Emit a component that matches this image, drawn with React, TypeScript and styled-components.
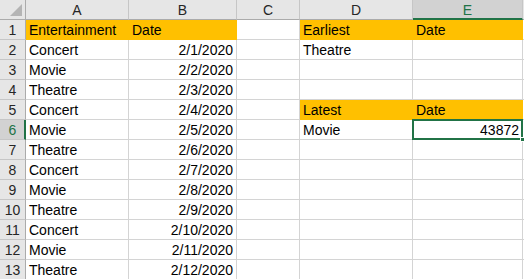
import React from 'react';
import styled, { createGlobalStyle, css } from 'styled-components';

const GlobalStyle = createGlobalStyle`
  html, body {
    margin: 0;
    padding: 0;
    background: #ffffff;
  }
  body {
    font-family: 'Liberation Sans', Arial, sans-serif;
    overflow: hidden;
  }
`;

const GREEN = '#217346';
const FILL = '#ffc000';
const GRID = '#d4d4d4';
const HEAD_LINE = '#ababab';

const COLUMNS = ['A', 'B', 'C', 'D', 'E'];
const SELECTED_COL = 'E';
const SELECTED_ROW = 6;

type CellData = { value?: string; align?: 'left' | 'right'; fill?: boolean };

const entertainment = ['Concert', 'Movie', 'Theatre'];

const buildRows = (): CellData[][] => {
  const rows: CellData[][] = [];
  for (let r = 1; r <= 13; r++) {
    const row: CellData[] = [{}, {}, {}, {}, {}];
    if (r === 1) {
      row[0] = { value: 'Entertainment', fill: true };
      row[1] = { value: 'Date', fill: true };
    } else {
      row[0] = { value: entertainment[(r - 2) % 3] };
      row[1] = { value: `2/${r - 1}/2020`, align: 'right' };
    }
    rows.push(row);
  }
  rows[0][3] = { value: 'Earliest', fill: true };
  rows[0][4] = { value: 'Date', fill: true };
  rows[1][3] = { value: 'Theatre' };
  rows[4][3] = { value: 'Latest', fill: true };
  rows[4][4] = { value: 'Date', fill: true };
  rows[5][3] = { value: 'Movie' };
  rows[5][4] = { value: '43872', align: 'right' };
  return rows;
};

const ROWS = buildRows();

const Sheet = styled.div`
  display: grid;
  grid-template-columns: 26px 103px 108px 63px 113px 110px 1fr;
  grid-auto-rows: 20px;
  width: 524px;
  height: 279px;
  overflow: hidden;
  font-size: 14px;
  color: #000;
`;

const Corner = styled.div`
  position: relative;
  background: #e6e6e6;
  border-right: 1px solid ${HEAD_LINE};
  border-bottom: 1px solid ${HEAD_LINE};
  box-sizing: border-box;

  &::after {
    content: '';
    position: absolute;
    right: 3px;
    bottom: 3px;
    width: 0;
    height: 0;
    border-left: 12px solid transparent;
    border-bottom: 12px solid #b4b4b4;
  }
`;

const ColHead = styled.div<{ $active?: boolean }>`
  display: flex;
  align-items: center;
  justify-content: center;
  box-sizing: border-box;
  background: #e6e6e6;
  color: #262626;
  border-right: 1px solid #c6c6c6;
  border-bottom: 1px solid ${HEAD_LINE};
  padding-top: 1px;
  ${({ $active }) =>
    $active &&
    css`
      background: #d2d2d2;
      color: ${GREEN};
      border-bottom: 2px solid ${GREEN};
      padding-top: 2px;
    `}
`;

const RowHead = styled.div<{ $active?: boolean }>`
  display: flex;
  align-items: flex-end;
  justify-content: center;
  box-sizing: border-box;
  background: #e6e6e6;
  color: #262626;
  border-right: 1px solid ${HEAD_LINE};
  border-bottom: 1px solid #c6c6c6;
  padding-bottom: 1px;
  ${({ $active }) =>
    $active &&
    css`
      background: #d2d2d2;
      color: ${GREEN};
      border-right: 2px solid ${GREEN};
      padding-left: 1px;
    `}
`;

const Cell = styled.div<{ $align?: 'left' | 'right'; $fill?: boolean; $selected?: boolean }>`
  position: relative;
  display: flex;
  align-items: flex-end;
  justify-content: ${({ $align }) => ($align === 'right' ? 'flex-end' : 'flex-start')};
  box-sizing: border-box;
  padding: 0 3px 1px 3px;
  white-space: nowrap;
  background: ${({ $fill }) => ($fill ? FILL : '#fff')};
  border-right: 1px solid ${({ $fill }) => ($fill ? FILL : GRID)};
  border-bottom: 1px solid ${({ $fill }) => ($fill ? FILL : GRID)};
  ${({ $selected }) =>
    $selected &&
    css`
      z-index: 1;
      &::before {
        content: '';
        position: absolute;
        left: -1px;
        top: -1px;
        right: -1px;
        bottom: -1px;
        border: 2px solid ${GREEN};
        pointer-events: none;
      }
      &::after {
        content: '';
        position: absolute;
        right: -3px;
        bottom: -3px;
        width: 5px;
        height: 5px;
        background: ${GREEN};
        border: 1px solid #fff;
        box-sizing: border-box;
      }
    `}
`;

const App: React.FC = () => (
  <>
    <GlobalStyle />
    <Sheet>
      <Corner />
      {COLUMNS.map((c) => (
        <ColHead key={c} $active={c === SELECTED_COL}>
          {c}
        </ColHead>
      ))}
      <ColHead />
      {ROWS.map((row, i) => (
        <React.Fragment key={i}>
          <RowHead $active={i + 1 === SELECTED_ROW}>{i + 1}</RowHead>
          {row.map((cell, j) => (
            <Cell
              key={j}
              $align={cell.align}
              $fill={cell.fill}
              $selected={i + 1 === SELECTED_ROW && COLUMNS[j] === SELECTED_COL}
            >
              {cell.value}
            </Cell>
          ))}
          <Cell />
        </React.Fragment>
      ))}
    </Sheet>
  </>
);

export default App;
